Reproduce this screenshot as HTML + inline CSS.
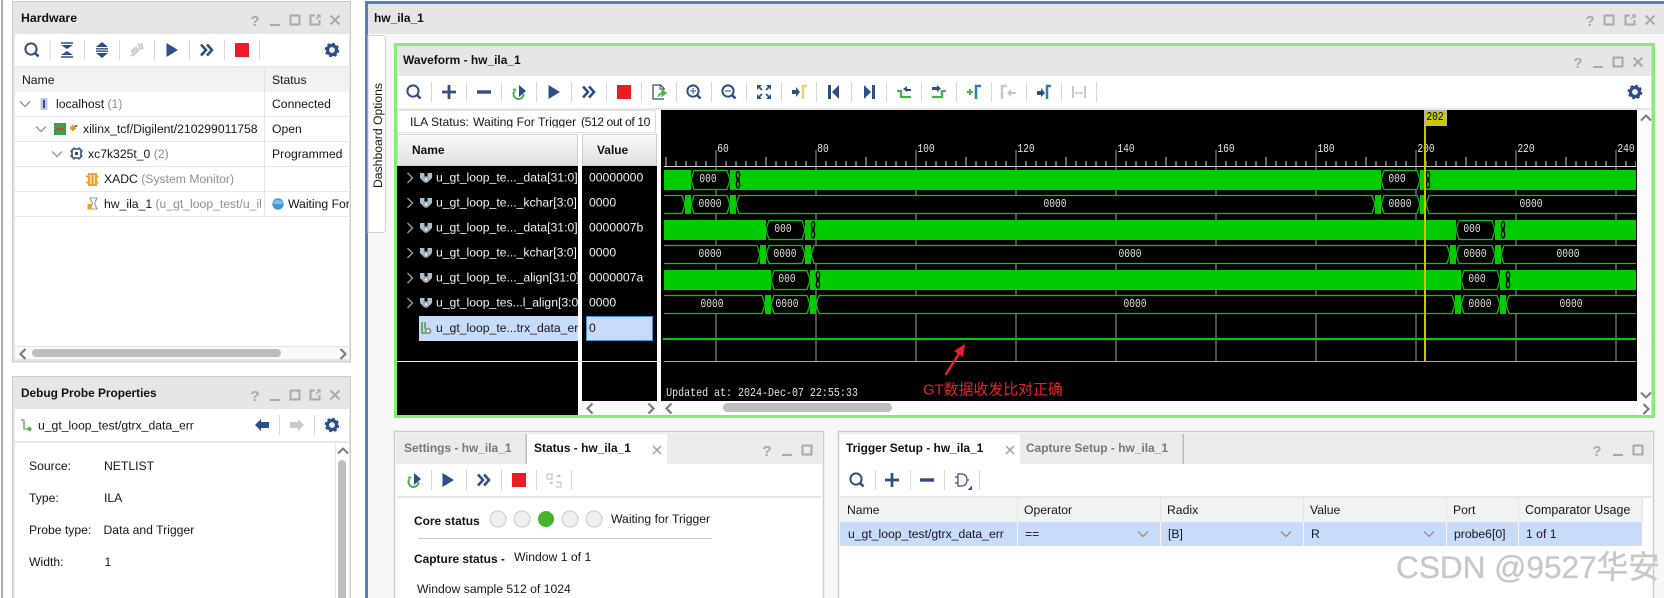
<!DOCTYPE html>
<html lang="en"><head><meta charset="utf-8"><title>hw_ila_1</title>
<style>
html,body{margin:0;padding:0;width:1664px;height:598px;overflow:hidden;background:#fff}
svg{display:block}
text{font-family:"Liberation Sans","Noto Sans CJK SC",sans-serif;font-size:12.2px;fill:#15151f;white-space:pre}
text.b{font-weight:bold;font-size:11.95px;fill:#111}
.g{fill:#8d8d9c}
text.gb{font-weight:bold;font-size:11.95px;fill:#777}
.w{fill:#f2f2f2}
.q{font-weight:bold;font-size:15px;fill:#a9a9a9;text-anchor:middle}
.m{font-family:"Liberation Mono",monospace;font-size:12px;fill:#e4e4e4;text-anchor:middle;transform-box:fill-box;transform-origin:center;transform:scaleX(.8)}
.h{fill:#000;stroke:#00cc00;stroke-width:1.2}
.gr{fill:#00cc00}
.sep{stroke:#d6d6d6;stroke-width:1}
.div{stroke:#e8e8e8;stroke-width:1}
</style></head>
<body>
<svg width="1664" height="598" viewBox="0 0 1664 598" xmlns="http://www.w3.org/2000/svg">
<defs>
<g id="search"><circle cx="-1" cy="-1" r="5.6" fill="none" stroke="#2f4e86" stroke-width="2"/><path d="M3 3L6.5 6.5" stroke="#2f4e86" stroke-width="2.6"/></g>
<g id="plus"><path d="M-7 0H7M0 -7V7" stroke="#2f4e86" stroke-width="2.8"/></g>
<g id="minus"><rect x="-7" y="-1.7" width="14" height="3.4" fill="#2f4e86"/></g>
<g id="play"><path d="M-5.5 -7L6 0L-5.5 7Z" fill="#2f4e86"/></g>
<g id="ff"><path d="M-6 -5.5L-1 0L-6 5.5M0 -5.5L5 0L0 5.5" fill="none" stroke="#2f4e86" stroke-width="2.6"/></g>
<g id="stop"><rect x="-7" y="-7" width="14" height="14" fill="#ed1c24"/></g>
<g id="rplay"><path d="M-4.5 -1A5 5 0 1 0 4.5 2" fill="none" stroke="#43b549" stroke-width="2"/><path d="M-7 -2L-4 -4L-2 -1Z" fill="#43b549"/><path d="M0 -7L7 -1L0 5Z" fill="#2f4e86"/></g>
<g id="export"><path d="M5 -2V-3.5L1.5 -7H-6V7H5" fill="none" stroke="#2f4e86" stroke-width="1.3"/><path d="M1 -7V-3H5" fill="none" stroke="#2f4e86" stroke-width="1"/><path d="M-1 5Q0 1 4 1M3 -2L7 1L3 4Z" fill="#43b549" stroke="#43b549" stroke-width="1.2"/></g>
<g id="zin"><use href="#search"/><path d="M-4 -1H2M-1 -4V2" stroke="#6f86ad" stroke-width="1.5"/></g>
<g id="zout"><use href="#search"/><path d="M-4 -1H2" stroke="#6f86ad" stroke-width="1.6"/></g>
<g id="fit"><path d="M-7 -7H-2L-7 -2ZM7 -7H2L7 -2ZM-7 7H-2L-7 2ZM7 7H2L7 2Z" fill="#2f4e86"/><path d="M-6 -6L-2 -2M6 -6L2 -2M-6 6L-2 2M6 6L2 2" stroke="#2f4e86" stroke-width="1.6"/></g>
<g id="arrR"><path d="M-7 -2H-3V-5L1 0L-3 5V2H-7Z" fill="#2f4e86"/></g>
<g id="mk1"><use href="#arrR"/><path d="M4 7V-6H8" fill="none" stroke="#e5d27c" stroke-width="2.6"/></g>
<g id="prev"><rect x="-6" y="-7" width="3" height="14" fill="#2f4e86"/><path d="M5 -7L-2 0L5 7Z" fill="#2f4e86"/></g>
<g id="next"><rect x="3" y="-7" width="3" height="14" fill="#2f4e86"/><path d="M-5 -7L2 0L-5 7Z" fill="#2f4e86"/></g>
<g id="st1"><path d="M-7 -1H-3V5H7" fill="none" stroke="#43b549" stroke-width="2.3"/><path d="M7 -3H3V-6L-1 -3L3 0V-1H7Z" fill="#2f4e86"/></g>
<g id="st2"><path d="M-7 5H3V-1H7" fill="none" stroke="#43b549" stroke-width="2.3"/><path d="M-7 -5H-2V-7L2 -3.5L-2 0V-2H-7Z" fill="#2f4e86"/></g>
<g id="mk2"><path d="M-7 0H-1M-4 -3V3" stroke="#43b549" stroke-width="2"/><path d="M2 7V-6H7" fill="none" stroke="#2d7fb0" stroke-width="2.5"/></g>
<g id="mk3"><path d="M-7 7V-6H-2" fill="none" stroke="#c8c8c8" stroke-width="2.5"/><path d="M7 0H2V-3L-2 1L2 5V2H7Z" fill="#c4c4c4"/></g>
<g id="mk4"><path d="M-7 -1H-3V-4L1 1L-3 5V3H-7Z" fill="#2f4e86"/><path d="M3 7V-6H7" fill="none" stroke="#2d7fb0" stroke-width="2.5"/></g>
<g id="mk5"><path d="M-6 -6V6M6 -6V6" stroke="#c8c8c8" stroke-width="2"/><path d="M-4 1H4" stroke="#c8c8c8" stroke-width="1.2"/><path d="M-4 1L-2 -1V3ZM4 1L2 -1V3Z" fill="#c8c8c8"/></g>
<g id="collapse"><path d="M-6 -7H6M-6 7H6" stroke="#2f4e86" stroke-width="1.6"/><path d="M-6 -5H6L0 -1ZM-6 5H6L0 1Z" fill="#2f4e86"/></g>
<g id="expand"><path d="M-6 -1.2H6M-6 1.2H6" stroke="#2f4e86" stroke-width="1.4"/><path d="M-6 -3H6L0 -8ZM-6 3H6L0 8Z" fill="#2f4e86"/></g>
<g id="auto"><path d="M-6 1L-1 -3L2 0L-3 5ZM1 -6L5 -6L6 -2L3 -1ZM-7 6L-3 5" fill="#d8d8d8" stroke="#c4c4c4" stroke-width="1"/></g>
<g id="gear"><circle r="4.5" fill="none" stroke="#2f4e86" stroke-width="3.2"/><circle r="6.2" fill="none" stroke="#2f4e86" stroke-width="2.2" stroke-dasharray="2.6 2.27"/></g>
<g id="min"><rect x="-5" y="4" width="10" height="2" fill="#a9a9a9"/></g>
<g id="max"><rect x="-4.5" y="-4.5" width="9" height="9" fill="none" stroke="#a9a9a9" stroke-width="2"/></g>
<g id="pop"><path d="M0 -4.5H-4.5V4.5H4.5V0" fill="none" stroke="#a9a9a9" stroke-width="2"/><path d="M1 -1L5 -5M2 -5H5V-2" fill="none" stroke="#a9a9a9" stroke-width="1.3"/></g>
<g id="close"><path d="M-4.5 -4.5L4.5 4.5M4.5 -4.5L-4.5 4.5" stroke="#a9a9a9" stroke-width="2"/></g>
<g id="chevR"><path d="M-2.5 -5L2.5 0L-2.5 5" fill="none" stroke="#9c9c9c" stroke-width="1.4"/></g>
<g id="chevD"><path d="M-5 -2.5L0 2.5L5 -2.5" fill="none" stroke="#909090" stroke-width="1.3"/></g>
<g id="sL"><path d="M2.5 -5L-2.5 0L2.5 5" fill="none" stroke="#7c7c7c" stroke-width="2.2"/></g>
<g id="sR"><path d="M-2.5 -5L2.5 0L-2.5 5" fill="none" stroke="#7c7c7c" stroke-width="2.2"/></g>
<g id="sU"><path d="M-5 2.5L0 -2.5L5 2.5" fill="none" stroke="#7c7c7c" stroke-width="2"/></g>
<g id="sD"><path d="M-5 -2.5L0 2.5L5 -2.5" fill="none" stroke="#7c7c7c" stroke-width="2"/></g>
<g id="bus"><path d="M-6 -5H-1.500V0H1.500V-5H6V0L3 3H-3L-6 0Z" fill="#a9bed6"/><circle cx="0" cy="1.500" r="3.3" fill="#a8a8a8"/><circle cx="0" cy="1.500" r="1.1" fill="#fff"/></g>
<g id="mark"><ellipse cx="0" cy="5" rx="1.6" ry="3.6" fill="#00cc00" stroke="#000" stroke-width="1.4"/><ellipse cx="0" cy="14.5" rx="1.6" ry="3.6" fill="#00cc00" stroke="#000" stroke-width="1.4"/><rect x="-1.6" y="8" width="3.2" height="3.5" fill="#000"/></g>
<clipPath id="cHw1"><rect x="15" y="92" width="247" height="130"/></clipPath>
<clipPath id="cHw2"><rect x="265" y="92" width="84" height="130"/></clipPath>
<clipPath id="cIla"><rect x="398" y="112" width="252" height="15.5"/></clipPath>
<clipPath id="cName"><rect x="397" y="166" width="181" height="180"/></clipPath>
</defs>

<!-- left column -->
<rect x="1" y="0" width="2" height="598" fill="#a8a8a8"/>
<rect x="12.5" y="1.5" width="338" height="360.5" fill="#e6e6e6" stroke="#cbcbcb"/>
<rect x="15" y="34" width="334" height="325" fill="#fff"/>
<text class="b" x="21" y="22" style="font-size:12.3px">Hardware</text>
<text class="q" x="255" y="26">?</text><use href="#min" x="275" y="20"/><use href="#max" x="295" y="20"/><use href="#pop" x="315" y="20"/><use href="#close" x="335" y="20"/>
<use href="#search" x="32" y="50"/><line class="sep" x1="50" x2="50" y1="40" y2="60"/>
<use href="#collapse" x="67" y="50"/><line class="sep" x1="84.5" x2="84.5" y1="40" y2="60"/>
<use href="#expand" x="102" y="50"/><line class="sep" x1="119.5" x2="119.5" y1="40" y2="60"/>
<use href="#auto" x="137" y="50"/><line class="sep" x1="154.5" x2="154.5" y1="40" y2="60"/>
<use href="#play" x="172" y="50"/><line class="sep" x1="189.5" x2="189.5" y1="40" y2="60"/>
<use href="#ff" x="207" y="50"/><line class="sep" x1="224.5" x2="224.5" y1="40" y2="60"/>
<use href="#stop" x="242" y="50"/><line class="sep" x1="259.5" x2="259.5" y1="40" y2="60"/>
<use href="#gear" x="332" y="50"/>
<rect x="15" y="66" width="334" height="26" fill="#f2f2f2"/>
<rect x="15" y="66" width="334" height="1.5" fill="#e8e8e8"/>
<text x="22" y="84">Name</text><text x="272" y="84">Status</text>
<line class="div" x1="15" x2="349" y1="116.5" y2="116.5"/><line class="div" x1="15" x2="349" y1="141.5" y2="141.5"/><line class="div" x1="15" x2="349" y1="166.5" y2="166.5"/><line class="div" x1="15" x2="349" y1="191.5" y2="191.5"/><line class="div" x1="15" x2="349" y1="216.5" y2="216.5"/>
<line x1="264.5" x2="264.5" y1="67" y2="216" stroke="#e2e2e2"/>
<use href="#chevD" x="25" y="104"/><use href="#chevD" x="41" y="129"/><use href="#chevD" x="57" y="154"/>
<rect x="40.5" y="98" width="7" height="12" fill="#b6c8e0"/><rect x="43" y="100" width="2" height="8" fill="#2f4e86"/>
<rect x="54" y="123" width="12" height="12" fill="#3f9e4d"/><rect x="56" y="128" width="8" height="2" fill="#c8463c"/>
<path d="M73 124.5L76.5 128L73 131.5L69.5 128Z" fill="#d89a2b"/><rect x="75" y="125" width="2.5" height="2" fill="#777"/>
<rect x="72" y="149" width="9" height="9" rx="1.500" fill="none" stroke="#2f4e86" stroke-width="1.6"/><rect x="75" y="152" width="3" height="3" fill="#2f4e86"/><path d="M70 151H72M70 156H72M81 151H83M81 156H83M74 147V149M79 147V149M74 158V160M79 158V160" stroke="#2f4e86"/>
<rect x="89" y="174" width="7" height="11" fill="#fbe3b5" stroke="#f0a22e" stroke-width="2"/><path d="M86 176.500H89M86 182.500H89M96 176.500H98.500M96 182.500H98.500" stroke="#f0a22e" stroke-width="2"/><rect x="91.500" y="174" width="2" height="11" fill="#f0a22e"/>
<path d="M90 198H97L94.5 203.5L97 209H90L92.5 203.5Z" fill="none" stroke="#9a9a9a" stroke-width="1.1"/><rect x="87.5" y="204" width="4" height="5.5" fill="#ec9d27"/>
<g clip-path="url(#cHw1)">
<text x="56" y="108">localhost <tspan class="g">(1)</tspan></text>
<text x="83" y="133">xilinx_tcf/Digilent/210299011758 <tspan class="g">(1)</tspan></text>
<text x="88" y="158">xc7k325t_0 <tspan class="g">(2)</tspan></text>
<text x="104" y="183">XADC <tspan class="g">(System Monitor)</tspan></text>
<text x="104" y="208">hw_ila_1 <tspan class="g">(u_gt_loop_test/u_ila_0)</tspan></text>
</g>
<g clip-path="url(#cHw2)">
<text x="272" y="108">Connected</text><text x="272" y="133">Open</text><text x="272" y="158">Programmed</text>
<text x="288" y="208">Waiting For Trigger</text>
</g>
<circle cx="278" cy="204" r="5.7" fill="#3f94d6"/><path d="M272.5 204A5.7 5.7 0 0 1 283.5 204Z" fill="#7fbdea"/>
<rect x="15" y="346" width="334" height="1" fill="#e4e4e4"/>
<rect x="15" y="347" width="334" height="12" fill="#f9f9f9"/>
<rect x="32" y="349" width="249" height="8" rx="4" fill="#bdbdbd"/>
<use href="#sL" x="23" y="354"/><use href="#sR" x="343" y="354"/>

<rect x="12.5" y="376.5" width="338" height="230" fill="#e6e6e6" stroke="#cbcbcb"/>
<rect x="15" y="409" width="334" height="32" fill="#fff"/>
<rect x="15" y="443" width="334" height="160" fill="#fff"/>
<line x1="335.5" x2="335.5" y1="443" y2="598" stroke="#e6e6e6"/>
<text class="b" x="21" y="397" style="font-size:11.85px">Debug Probe Properties</text>
<text class="q" x="255" y="401">?</text><use href="#min" x="275" y="395"/><use href="#max" x="295" y="395"/><use href="#pop" x="315" y="395"/><use href="#close" x="335" y="395"/>
<path d="M21 420H24V429H29" fill="none" stroke="#4db04f" stroke-width="1.3"/><circle cx="29.5" cy="429" r="2" fill="#4db04f"/>
<text x="38" y="429.5">u_gt_loop_test/gtrx_data_err</text>
<path d="M269 422V428H261V431L255 425L261 419V422Z" fill="#2f4e86"/><line class="sep" x1="279.5" x2="279.5" y1="415" y2="435"/>
<path d="M290 422V428H298V431L304 425L298 419V422Z" fill="#c9c9c9"/><line class="sep" x1="314.5" x2="314.5" y1="415" y2="435"/>
<use href="#gear" x="332" y="425"/>
<text x="29" y="470">Source:</text><text x="104" y="470">NETLIST</text>
<text x="29" y="502">Type:</text><text x="104" y="502">ILA</text>
<text x="29" y="534">Probe type:</text><text x="103.5" y="534">Data and Trigger</text>
<text x="29" y="566">Width:</text><text x="104.5" y="566">1</text>
<use href="#sU" x="343" y="451"/>
<rect x="338" y="460" width="8" height="150" rx="4" fill="#bdbdbd"/>

<!-- main area -->
<rect x="365" y="1" width="1299" height="597" fill="#f7f7f7"/>
<rect x="365" y="1" width="1299" height="3" fill="#4f7fcc"/>
<rect x="365" y="1" width="3" height="597" fill="#4f7fcc"/>
<rect x="368" y="4" width="1296" height="30" fill="#e6e6e6"/>
<text class="b" x="374" y="22">hw_ila_1</text>
<text class="q" x="1590" y="26">?</text><use href="#max" x="1609" y="20"/><use href="#pop" x="1630" y="20"/><use href="#close" x="1650" y="20"/>

<path d="M368 35.500H382Q385.500 35.500 385.500 39V229Q385.500 232.500 382 232.500H368Z" fill="#fff" stroke="#cfcfcf"/>
<text transform="translate(382 188) rotate(-90)">Dashboard Options</text>

<!-- waveform frame -->
<rect x="394" y="43" width="1261" height="375" fill="#86ea7d"/>
<rect x="397" y="46" width="1254.500" height="369" fill="#fff"/>
<rect x="397" y="46" width="1254.500" height="30" fill="#e6e6e6"/>
<text class="b" x="403" y="64">Waveform - hw_ila_1</text>
<text class="q" x="1578" y="68">?</text><use href="#min" x="1598" y="62"/><use href="#max" x="1618" y="62"/><use href="#close" x="1638" y="62"/>
<rect x="397" y="108" width="1254.500" height="2" fill="#e8e8e8"/>
<use href="#search" x="414" y="92"/><use href="#plus" x="449" y="92"/><use href="#minus" x="484" y="92"/><use href="#rplay" x="519" y="92"/><use href="#play" x="554" y="92"/><use href="#ff" x="589" y="92"/><use href="#stop" x="624" y="92"/><use href="#export" x="659" y="92"/><use href="#zin" x="694" y="92"/><use href="#zout" x="729" y="92"/><use href="#fit" x="764" y="92"/><use href="#mk1" x="799" y="92"/><use href="#prev" x="834" y="92"/><use href="#next" x="869" y="92"/><use href="#st1" x="904" y="92"/><use href="#st2" x="939" y="92"/><use href="#mk2" x="974" y="92"/><use href="#mk3" x="1009" y="92"/><use href="#mk4" x="1044" y="92"/><use href="#mk5" x="1079" y="92"/>
<path class="sep" d="M431.500 82V102M466.500 82V102M501.500 82V102M536.500 82V102M571.500 82V102M606.500 82V102M641.500 82V102M676.500 82V102M711.500 82V102M746.500 82V102M781.500 82V102M816.500 82V102M851.500 82V102M886.500 82V102M921.500 82V102M956.500 82V102M991.500 82V102M1026.500 82V102M1061.500 82V102M1096.500 82V102" fill="none"/>
<use href="#gear" x="1635" y="92"/>

<!-- ILA status + headers -->
<rect x="397.500" y="110.500" width="258" height="22" fill="#fff" stroke="#dcdcdc"/>
<g clip-path="url(#cIla)"><text x="410" y="126">ILA Status:<tspan x="473">Waiting For Trigger </tspan><tspan x="581" style="letter-spacing:-.45px">(512 out of 1024)</tspan></text></g>
<defs><linearGradient id="hdr" x1="0" y1="0" x2="0" y2="1"><stop offset="0" stop-color="#fafafa"/><stop offset="1" stop-color="#e0e0e0"/></linearGradient></defs>
<rect x="397.500" y="134.500" width="180" height="31" fill="url(#hdr)" stroke="#cfcfcf"/>
<rect x="582.500" y="134.500" width="74" height="31" fill="url(#hdr)" stroke="#cfcfcf"/>
<text class="b" x="412" y="154">Name</text><text class="b" x="597" y="154">Value</text>

<!-- name + value columns -->
<rect x="397" y="166" width="181" height="249" fill="#000"/>
<rect x="582" y="166" width="75" height="235" fill="#000"/>
<rect x="582" y="401" width="75" height="14" fill="#f9f9f9"/>
<use href="#sL" x="590" y="408.500"/><use href="#sR" x="651" y="408.500"/>
<rect x="419" y="316" width="159" height="25" fill="#c8dcfa"/>
<rect x="586.500" y="316.500" width="66" height="24" fill="#c8dcfa" stroke="#3f8fd2"/>
<rect x="397" y="361" width="181" height="1" fill="#f4f4f4"/><rect x="582" y="361" width="75" height="1" fill="#f4f4f4"/>
<use href="#chevR" x="410" y="178"/><use href="#chevR" x="410" y="203"/><use href="#chevR" x="410" y="228"/><use href="#chevR" x="410" y="253"/><use href="#chevR" x="410" y="278"/><use href="#chevR" x="410" y="303"/>
<use href="#bus" x="426" y="178"/><use href="#bus" x="426" y="203"/><use href="#bus" x="426" y="228"/><use href="#bus" x="426" y="253"/><use href="#bus" x="426" y="278"/><use href="#bus" x="426" y="303"/>
<path d="M422 322V333H427" fill="none" stroke="#43a047" stroke-width="1.5"/><path d="M425 322V329" stroke="#43a047" stroke-width="1.5"/><circle cx="428" cy="331" r="3.4" fill="#999"/><circle cx="428" cy="331" r="1.2" fill="#fff"/>
<g clip-path="url(#cName)">
<text class="w" x="436" y="181.500">u_gt_loop_te..._data[31:0]</text>
<text class="w" x="436" y="206.500">u_gt_loop_te..._kchar[3:0]</text>
<text class="w" x="436" y="231.500">u_gt_loop_te..._data[31:0]</text>
<text class="w" x="436" y="256.500">u_gt_loop_te..._kchar[3:0]</text>
<text class="w" x="436" y="281.500">u_gt_loop_te..._align[31:0]</text>
<text class="w" x="436" y="306.500">u_gt_loop_tes...l_align[3:0]</text>
<text x="436" y="332">u_gt_loop_te...trx_data_err</text>
</g>
<text class="w" x="589" y="181.500">00000000</text><text class="w" x="589" y="206.500">0000</text><text class="w" x="589" y="231.500">0000007b</text><text class="w" x="589" y="256.500">0000</text><text class="w" x="589" y="281.500">0000007a</text><text class="w" x="589" y="306.500">0000</text><text x="589" y="332">0</text>

<!-- waveform -->
<rect x="661" y="110" width="976" height="291" fill="#000"/>
<defs>
<pattern id="t10" x="715.500" y="0" width="10" height="598" patternUnits="userSpaceOnUse"><rect x="0" y="161" width="1" height="5" fill="#d0d0d0"/></pattern>
<pattern id="t50" x="715.500" y="0" width="50" height="598" patternUnits="userSpaceOnUse"><rect x="0" y="157" width="1" height="9" fill="#d0d0d0"/></pattern>
<pattern id="t100" x="715.500" y="0" width="100" height="598" patternUnits="userSpaceOnUse"><rect x="0" y="150" width="1" height="211" fill="#a0a0a0"/></pattern>
</defs>
<rect x="664" y="166" width="972" height="1" fill="#d0d0d0"/>
<rect x="664" y="150" width="972" height="17" fill="url(#t10)"/>
<rect x="664" y="150" width="972" height="17" fill="url(#t50)"/>
<rect x="700" y="150" width="936" height="211" fill="url(#t100)"/>
<rect x="664" y="361" width="972" height="1" fill="#a8a8a8"/>
<text class="m" x="723" y="152">60</text><text class="m" x="823" y="152">80</text><text class="m" x="926" y="152">100</text><text class="m" x="1026" y="152">120</text><text class="m" x="1126" y="152">140</text><text class="m" x="1226" y="152">160</text><text class="m" x="1326" y="152">180</text><text class="m" x="1426" y="152">200</text><text class="m" x="1526" y="152">220</text><text class="m" x="1626" y="152">240</text>

<!-- green spans -->
<path class="gr" d="M664 170H691V190H664ZM730 170H1381V190H730ZM1420 170H1636V190H1420Z"/>
<path class="gr" d="M664 220H766V240H664ZM805 220H1456V240H805ZM1495 220H1636V240H1495Z"/>
<path class="gr" d="M664 270H771V290H664ZM810 270H1461V290H810ZM1500 270H1636V290H1500Z"/>
<path class="gr" d="M685 195H691V214H685ZM730 195H736V214H730ZM1375 195H1381V214H1375ZM1420 195H1426V214H1420Z"/>
<path class="gr" d="M760 245H766V264H760ZM805 245H811V264H805ZM1450 245H1456V264H1450ZM1495 245H1501V264H1495Z"/>
<path class="gr" d="M765 295H771V314H765ZM810 295H816V314H810ZM1455 295H1461V314H1455ZM1500 295H1506V314H1500Z"/>
<!-- hex boxes -->
<path class="h" d="M691 180L694 170.500H727L730 180L727 189.500H694ZM1381 180L1384 170.500H1417L1420 180L1417 189.500H1384Z"/>
<path class="h" d="M664 195.500H682L685 204.500L682 213.500H664M691 204.500L694 195.500H727L730 204.500L727 213.500H694ZM736 204.500L739 195.500H1372L1375 204.500L1372 213.500H739ZM1381 204.500L1384 195.500H1417L1420 204.500L1417 213.500H1384ZM1636 195.500H1429L1426 204.500L1429 213.500H1636"/>
<path class="h" d="M766 230L769 220.500H802L805 230L802 239.500H769ZM1456 230L1459 220.500H1492L1495 230L1492 239.500H1459Z"/>
<path class="h" d="M664 245.500H757L760 254.500L757 263.500H664M766 254.500L769 245.500H802L805 254.500L802 263.500H769ZM811 254.500L814 245.500H1447L1450 254.500L1447 263.500H814ZM1456 254.500L1459 245.500H1492L1495 254.500L1492 263.500H1459ZM1636 245.500H1504L1501 254.500L1504 263.500H1636"/>
<path class="h" d="M771 280L774 270.500H807L810 280L807 289.500H774ZM1461 280L1464 270.500H1497L1500 280L1497 289.500H1464Z"/>
<path class="h" d="M664 295.500H762L765 304.500L762 313.500H664M771 304.500L774 295.500H807L810 304.500L807 313.500H774ZM816 304.500L819 295.500H1452L1455 304.500L1452 313.500H819ZM1461 304.500L1464 295.500H1497L1500 304.500L1497 313.500H1464ZM1636 295.500H1509L1506 304.500L1509 313.500H1636"/>
<use href="#mark" x="738" y="170"/><use href="#mark" x="1428" y="170"/><use href="#mark" x="813" y="220"/><use href="#mark" x="1503" y="220"/><use href="#mark" x="818" y="270"/><use href="#mark" x="1508" y="270"/>
<rect x="663" y="338" width="973" height="2" fill="#00cc00"/>
<text class="m" x="708" y="182">000</text><text class="m" x="1397" y="182">000</text>
<text class="m" x="710" y="207">0000</text><text class="m" x="1055" y="207">0000</text><text class="m" x="1400" y="207">0000</text><text class="m" x="1531" y="207">0000</text>
<text class="m" x="783" y="232">000</text><text class="m" x="1472" y="232">000</text>
<text class="m" x="710" y="257">0000</text><text class="m" x="785" y="257">0000</text><text class="m" x="1130" y="257">0000</text><text class="m" x="1475" y="257">0000</text><text class="m" x="1568" y="257">0000</text>
<text class="m" x="787" y="282">000</text><text class="m" x="1477" y="282">000</text>
<text class="m" x="712" y="307">0000</text><text class="m" x="787" y="307">0000</text><text class="m" x="1135" y="307">0000</text><text class="m" x="1480" y="307">0000</text><text class="m" x="1571" y="307">0000</text>
<text class="m" style="font-family:'Liberation Mono',monospace;font-size:12px;transform:scaleX(.833)" x="762" y="396">Updated at: 2024-Dec-07 22:55:33</text>

<!-- cursor -->
<rect x="1424" y="110" width="2" height="251" fill="#c8c800"/>
<rect x="1424.500" y="110.500" width="22" height="15" fill="#c8c800" stroke="#b4b4b4"/>
<text class="m" style="fill:#000" x="1435" y="120">202</text>

<!-- annotation -->
<path d="M946 374L960 352" stroke="#ea1f2b" stroke-width="2.4" stroke-linecap="round"/>
<path d="M965 344L963 357L954 351Z" fill="#ea1f2b"/>
<text x="923" y="394.500" style="font-size:14.900px;fill:#e8212b">GT数据收发比对正确</text>

<!-- waveform scrollbars -->
<rect x="661" y="401" width="976" height="14" fill="#fbfbfb"/>
<rect x="723" y="403" width="169" height="9" rx="4.5" fill="#bdbdbd"/>
<use href="#sL" x="669" y="408.500"/><use href="#sR" x="1646" y="409"/>
<rect x="1637" y="110" width="14" height="291" fill="#fbfbfb"/>
<use href="#sU" x="1646" y="118"/><use href="#sD" x="1646" y="395"/>

<!-- status panel -->
<rect x="394.500" y="431.500" width="429" height="180" fill="#fff" stroke="#cbcbcb" stroke-width="1.500"/>
<rect x="396" y="433" width="426" height="31" fill="#ebebeb"/>
<rect x="525.500" y="434" width="1.500" height="30" fill="#bcbcbc"/>
<rect x="527" y="434" width="140" height="30" fill="#fff"/>
<text class="gb" x="404" y="452">Settings - hw_ila_1</text>
<text class="b" x="534" y="452">Status - hw_ila_1</text>
<path d="M653 446L661 454M661 446L653 454" stroke="#a0a0a0" stroke-width="1.500"/>
<text class="q" x="767" y="456">?</text><use href="#min" x="787" y="450"/><use href="#max" x="807" y="450"/>
<rect x="397" y="496" width="424" height="2" fill="#e6e6e6"/>
<use href="#rplay" x="414" y="480"/><use href="#play" x="448" y="480"/><use href="#ff" x="484" y="480"/><use href="#stop" x="519" y="480"/>
<path d="M547 474H552V479H547ZM556 482H561V487H556" fill="none" stroke="#c4c4c4" stroke-width="1.200"/><path d="M556 477L559 474L561 477ZM553 484L549 484L552 481Z" fill="#c4c4c4"/>
<path class="sep" d="M431.500 470V490M466.500 470V490M501.500 470V490M536.500 470V490M571.500 470V490" fill="none"/>
<text class="b" x="414" y="525">Core status</text>
<circle cx="498" cy="519" r="8" fill="#efefef" stroke="#c8c8c8"/><circle cx="522" cy="519" r="8" fill="#efefef" stroke="#c8c8c8"/><circle cx="546" cy="519" r="8" fill="#46b32b"/><circle cx="570" cy="519" r="8" fill="#efefef" stroke="#c8c8c8"/><circle cx="594" cy="519" r="8" fill="#efefef" stroke="#c8c8c8"/>
<text x="611" y="523">Waiting for Trigger</text>
<rect x="418" y="538" width="294" height="1" fill="#c8c8c8"/>
<text class="b" x="414" y="563">Capture status -</text><text x="514" y="561">Window 1 of 1</text>
<text x="417" y="593">Window sample 512 of 1024</text>

<!-- trigger panel -->
<rect x="838.500" y="431.500" width="815" height="180" fill="#fff" stroke="#cbcbcb" stroke-width="1.500"/>
<rect x="840" y="433" width="812" height="31" fill="#ebebeb"/>
<rect x="840" y="434" width="180" height="30" fill="#fff"/>
<rect x="1182.500" y="434" width="1.500" height="30" fill="#bcbcbc"/>
<text class="b" x="846" y="452">Trigger Setup - hw_ila_1</text>
<text class="gb" x="1026" y="452">Capture Setup - hw_ila_1</text>
<path d="M1006 446L1014 454M1014 446L1006 454" stroke="#a0a0a0" stroke-width="1.500"/>
<text class="q" x="1597" y="456">?</text><use href="#min" x="1618" y="450"/><use href="#max" x="1638" y="450"/>
<use href="#search" x="857" y="480"/><use href="#plus" x="892" y="480"/><use href="#minus" x="927" y="480"/>
<path d="M958 474H961Q967 474 967 480Q967 486 961 486H958ZM955 477H958M955 483H958M967 480H969" fill="none" stroke="#2f4e86" stroke-width="1.200"/>
<path d="M972 490V485.500L967.500 490Z" fill="#555"/>
<path class="sep" d="M875.500 470V490M910.500 470V490M944.500 470V490M979.500 470V490" fill="none"/>
<rect x="840" y="496" width="812" height="2" fill="#e6e6e6"/>
<rect x="840" y="498" width="802" height="24" fill="#f2f2f2"/>
<rect x="840" y="522" width="802" height="24" fill="#c8dcfa"/>
<path d="M1017.500 498V546M1160.500 498V546M1303.500 498V546M1446.500 498V546M1518.500 498V546M1642.500 498V522" fill="none" stroke="#e4e4e4"/>
<path d="M1017.500 522V546M1160.500 522V546M1303.500 522V546M1446.500 522V546M1518.500 522V546" fill="none" stroke="#f4f8ff"/>
<text x="847" y="514">Name</text><text x="1024" y="514">Operator</text><text x="1167" y="514">Radix</text><text x="1310" y="514">Value</text><text x="1453" y="514">Port</text><text x="1525" y="514" style="font-size:12.470px">Comparator Usage</text>
<text x="848" y="538">u_gt_loop_test/gtrx_data_err</text><text x="1025" y="538">==</text><text x="1168" y="538">[B]</text><text x="1311" y="538">R</text><text x="1454" y="538">probe6[0]</text><text x="1526" y="538">1 of 1</text>
<use href="#chevD" x="1143" y="534"/><use href="#chevD" x="1286" y="534"/><use href="#chevD" x="1429" y="534"/>

<!-- watermark -->
<text x="1396" y="578" style="font-size:31.600px;fill:#c8c8c8;stroke:#b4b4b4;stroke-width:.3;paint-order:stroke">CSDN @9527华安</text>
</svg>
</body></html>
